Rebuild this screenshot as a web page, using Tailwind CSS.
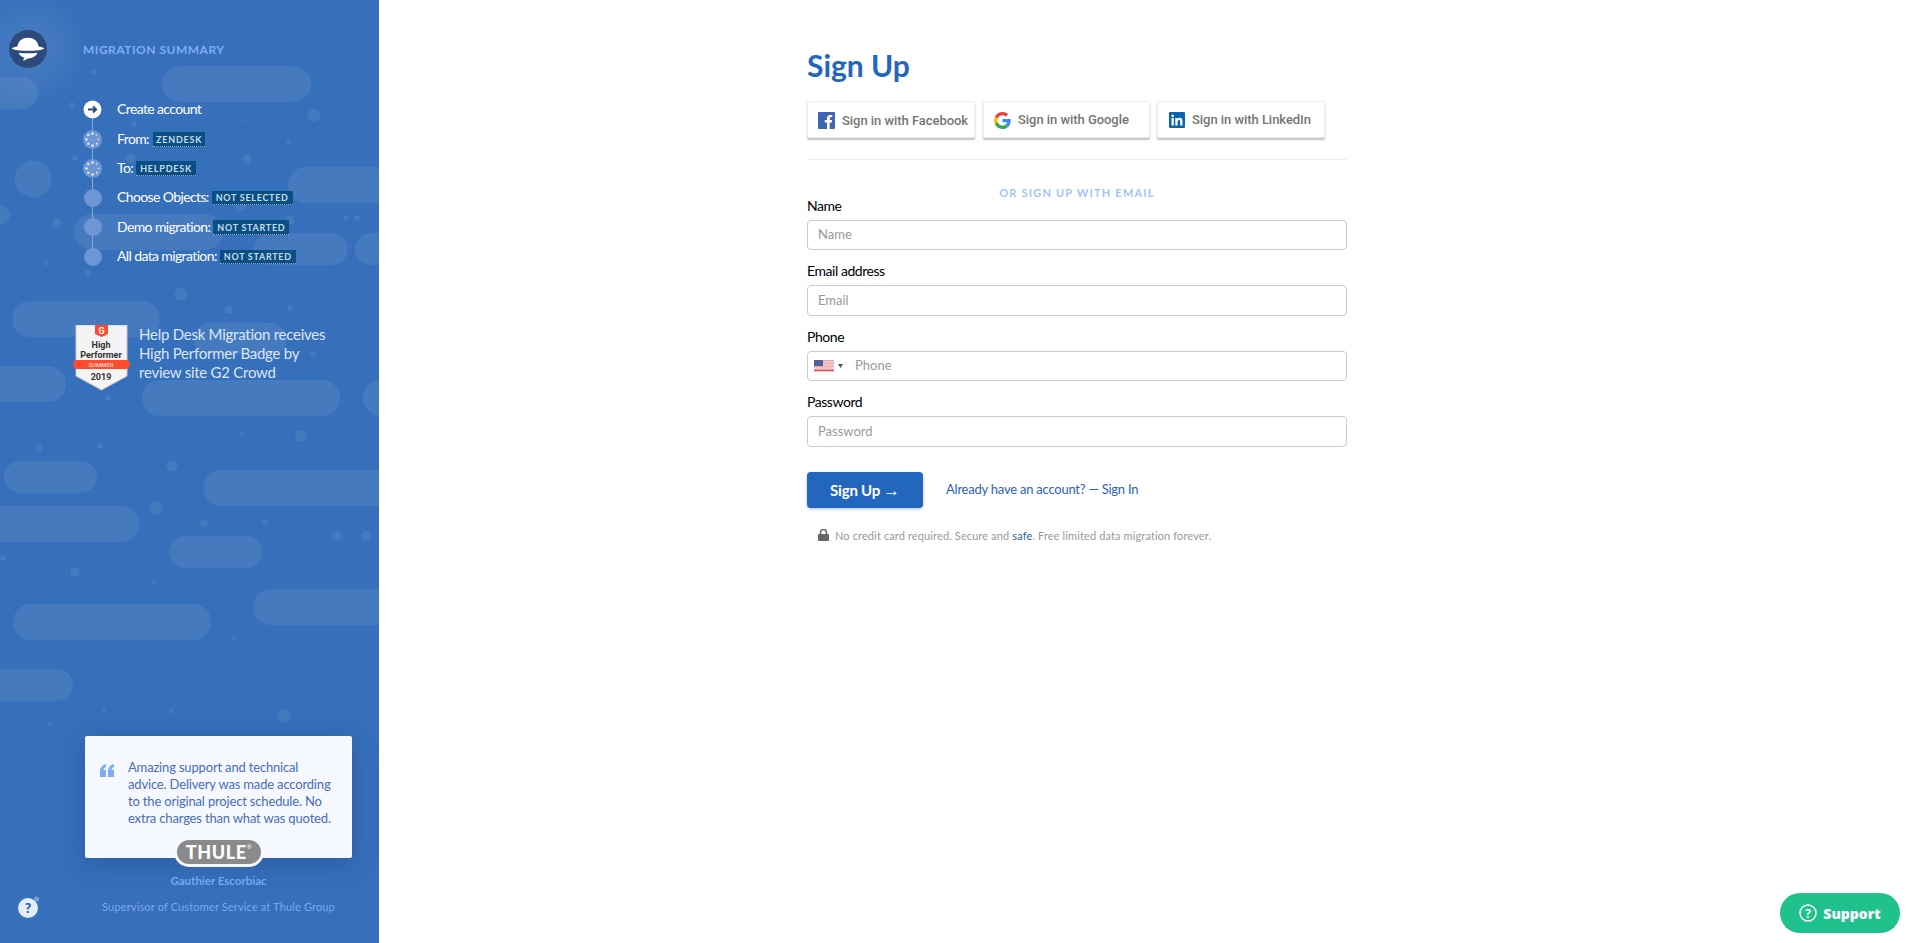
<!doctype html>
<html>
<head>
  <meta charset="UTF-8">
  <meta name="viewport" content="width=device-width, initial-scale=1.0">
  <script src="https://cdn.jsdelivr.net/npm/@tailwindcss/browser@4"></script>
</head>
<body class="bg-white h-screen overflow-hidden flex font-['Lato',sans-serif]">

  <!-- sidebar -->
  <aside class="relative w-[379px] h-[943px] shrink-0 overflow-hidden bg-[#366fba] flex flex-col">
    <svg class="absolute inset-0" width="379" height="943" fill="#fff" fill-opacity="0.08">
      <defs><radialGradient id="glow"><stop offset="0" stop-color="#fff" stop-opacity="0.1"/><stop offset="1" stop-color="#fff" stop-opacity="0"/></radialGradient></defs>
      <circle cx="30" cy="48" r="60" fill="url(#glow)" fill-opacity="1"/>
      <rect x="162" y="66" width="149" height="36" rx="18"/><rect x="-20" y="77" width="58" height="32" rx="16"/>
      <rect x="288" y="167" width="120" height="36" rx="18"/><rect x="74" y="214" width="149" height="36" rx="18"/>
      <rect x="254" y="233" width="94" height="32" rx="16"/><rect x="355" y="233" width="60" height="32" rx="16"/>
      <rect x="12" y="301" width="148" height="36" rx="18"/><rect x="194" y="323" width="93" height="32" rx="16"/>
      <rect x="-20" y="366" width="86" height="36" rx="18"/><rect x="142" y="380" width="198" height="36" rx="18"/>
      <rect x="363" y="380" width="60" height="36" rx="18"/><rect x="4" y="461" width="93" height="32" rx="16"/>
      <rect x="203" y="470" width="200" height="36" rx="18"/><rect x="-20" y="506" width="159" height="36" rx="18"/>
      <rect x="169" y="536" width="93" height="32" rx="16"/><rect x="253" y="589" width="150" height="36" rx="18"/>
      <rect x="13" y="604" width="198" height="36" rx="18"/><rect x="-20" y="669" width="93" height="32" rx="16"/>
      <circle cx="94" cy="72" r="3"/><circle cx="72" cy="105" r="3"/><circle cx="134" cy="124" r="3"/><circle cx="314" cy="115" r="6.5"/>
      <circle cx="289" cy="142" r="2.5"/><circle cx="75" cy="158" r="3"/><circle cx="247" cy="159" r="4.5"/><circle cx="33" cy="179" r="18.5"/>
      <circle cx="0" cy="215" r="10"/><circle cx="57" cy="223" r="4.5"/><circle cx="290" cy="220" r="4"/><circle cx="346" cy="218" r="3"/>
      <circle cx="357" cy="218" r="3"/><circle cx="46" cy="263" r="2.5"/><circle cx="88" cy="273" r="3.5"/><circle cx="181" cy="294" r="6.5"/>
      <circle cx="241" cy="205" r="6"/><circle cx="243" cy="121" r="1.5"/><circle cx="131" cy="158" r="5"/>
      <circle cx="229" cy="310" r="4"/><circle cx="290" cy="308" r="3"/><circle cx="108" cy="398" r="3"/><circle cx="313" cy="354" r="3"/>
      <circle cx="242" cy="434" r="2"/><circle cx="301" cy="436" r="6"/><circle cx="39" cy="448" r="3.5"/><circle cx="100" cy="446" r="3"/>
      <circle cx="172" cy="466" r="5.5"/><circle cx="156" cy="508" r="7"/><circle cx="204" cy="523" r="4"/><circle cx="265" cy="522" r="3"/>
      <circle cx="337" cy="536" r="5"/><circle cx="366" cy="536" r="5"/><circle cx="3" cy="558" r="3"/><circle cx="75" cy="572" r="5"/>
      <circle cx="154" cy="582" r="2"/><circle cx="234" cy="638" r="2"/><circle cx="284" cy="716" r="6.5"/><circle cx="104" cy="710" r="2"/>
      <circle cx="171" cy="711" r="2"/><circle cx="50" cy="724" r="2"/>
    </svg>

    <div class="relative flex pl-[9px] pt-[30px]">
      <svg class="w-[38px] h-[38px] shrink-0" viewBox="0 0 38 38">
        <circle cx="19" cy="19" r="19" fill="#2c4a7c"/>
        <path d="M8.500 16.500C9 11 13.500 7.700 19 7.700s10 3.300 10.500 8.800c2.500.4 4.500 1 6 1.700-1.500 1-3.500 1.700-6 2.100-3 .4-7 .5-10.500.5s-7.500-.1-10.500-.5c-2.500-.4-4.500-1.100-6-2.100 1.500-.7 3.500-1.300 6-1.700z" fill="#fff"/>
        <path d="M9.500 22.800c3 .4 6 .5 9.500.5s6.500-.1 9.500-.5c-1.300 3.400-5 5.500-9.500 5.700l-5 2.500 1.200-3.300c-2.800-1-4.800-2.700-5.700-4.900z" fill="#fff"/>
      </svg>
      <h2 class="ml-[36px] mt-[12px] text-[12px] leading-[16px] font-bold tracking-[0.5px] text-[#7fadf6]">MIGRATION SUMMARY</h2>
    </div>

    <ul class="relative mt-[27px] ml-[83px] flex flex-col text-[14px] text-white tracking-[-0.62px]">
      <li class="absolute left-[9px] top-[10px] h-[150px] w-px bg-[#88a8dc]"></li>
      <li class="relative h-[29.4px] flex items-center">
        <svg class="w-[19px] h-[19px] mr-[15px]" viewBox="0 0 19 19"><circle cx="9.500" cy="9.500" r="9" fill="#fff"/><path d="M5 9.500h8M10 6.500l3.200 3-3.200 3" fill="none" stroke="#2c4a7c" stroke-width="1.800"/></svg>
        <span class="mb-[2px]">Create account</span>
      </li>
      <li class="relative h-[29.4px] flex items-center">
        <svg class="w-[19px] h-[19px] mr-[15px]" viewBox="0 0 19 19"><circle cx="9.500" cy="9.500" r="9.500" fill="#6f96d4"/><g fill="#dfe9fa"><circle cx="9.500" cy="3.500" r="1.300"/><circle cx="13.500" cy="5" r=".8"/><circle cx="15.500" cy="9.500" r=".8"/><circle cx="13.800" cy="13.800" r="1"/><circle cx="9.500" cy="15.500" r="1.300"/><circle cx="5.300" cy="13.800" r="1.200"/><circle cx="3.500" cy="9.500" r="1.300"/><circle cx="5.300" cy="5" r="1.300"/></g></svg>
        <span class="mb-[2px]">From:</span>
        <span class="ml-[4px] h-[15px] px-[3px] bg-[#0a4f84] border-b border-dotted border-[#9ab] text-[9px] leading-[15px] font-bold tracking-[0.8px] text-[#c9dcec]">ZENDESK</span>
      </li>
      <li class="relative h-[29.4px] flex items-center">
        <svg class="w-[19px] h-[19px] mr-[15px]" viewBox="0 0 19 19"><circle cx="9.500" cy="9.500" r="9.500" fill="#6f96d4"/><g fill="#dfe9fa"><circle cx="9.500" cy="3.500" r="1.300"/><circle cx="13.500" cy="5" r=".8"/><circle cx="15.500" cy="9.500" r=".8"/><circle cx="13.800" cy="13.800" r="1"/><circle cx="9.500" cy="15.500" r="1.300"/><circle cx="5.300" cy="13.800" r="1.200"/><circle cx="3.500" cy="9.500" r="1.300"/><circle cx="5.300" cy="5" r="1.300"/></g></svg>
        <span class="mb-[2px]">To:</span>
        <span class="ml-[3px] h-[15px] px-[4px] bg-[#0a4f84] border-b border-dotted border-[#9ab] text-[9px] leading-[15px] font-bold tracking-[0.8px] text-[#c9dcec]">HELPDESK</span>
      </li>
      <li class="relative h-[29.4px] flex items-center">
        <span class="w-[18px] h-[18px] ml-px mr-[15px] rounded-full bg-[#6f96d4]"></span>
        <span class="mb-[2px]">Choose Objects:</span>
        <span class="ml-[3px] h-[14px] px-[4px] bg-[#0a4f84] border-b border-dotted border-[#9ab] text-[9px] leading-[14px] font-bold tracking-[0.7px] text-[#c9dcec]">NOT SELECTED</span>
      </li>
      <li class="relative h-[29.4px] flex items-center">
        <span class="w-[18px] h-[18px] ml-px mr-[15px] rounded-full bg-[#6f96d4]"></span>
        <span class="mb-[2px]">Demo migration:</span>
        <span class="ml-[3px] h-[15px] px-[4px] bg-[#0a4f84] border-b border-dotted border-[#9ab] text-[9px] leading-[15px] font-bold tracking-[0.7px] text-[#c9dcec]">NOT STARTED</span>
      </li>
      <li class="relative h-[29.4px] flex items-center">
        <span class="w-[18px] h-[18px] ml-px mr-[15px] rounded-full bg-[#6f96d4]"></span>
        <span class="mb-[2px]">All data migration:</span>
        <span class="ml-[3px] h-[14px] px-[4px] bg-[#0a4f84] border-b border-dotted border-[#9ab] text-[9px] leading-[14px] font-bold tracking-[0.7px] text-[#c9dcec]">NOT STARTED</span>
      </li>
    </ul>

    <div class="relative mt-[54px] ml-[73px] flex">
      <svg class="w-[57px] h-[66px] shrink-0" viewBox="0 0 57 66" font-family="Roboto,sans-serif" text-anchor="middle">
        <path d="M3 0h51v51L28.500 65 3 51z" fill="#f4f4f4" stroke="#c9c9c9"/>
        <path d="M22 0h13v9l-6.500 3L22 9z" fill="#ff4b2b"/>
        <text x="28.500" y="8.500" font-size="9" font-weight="700" fill="#fff">G</text>
        <text x="28" y="23" font-size="9" font-weight="700" fill="#333">High</text>
        <text x="28" y="32.500" font-size="9" font-weight="700" fill="#333">Performer</text>
        <rect x="0" y="35" width="57" height="9" rx="4.500" fill="#ff4b2b"/>
        <text x="28" y="42" font-size="6" font-weight="500" fill="#ffd9cf">SUMMER</text>
        <text x="28" y="54.500" font-size="9" font-weight="700" fill="#333">2019</text>
      </svg>
      <p class="ml-[9px] w-[200px] text-[15px] leading-[19px] tracking-[-0.25px] text-[#dbe6f7]">Help Desk Migration receives High Performer Badge by review site G2 Crowd</p>
    </div>

    <div class="relative mt-auto mb-[29px] ml-[85px] w-[267px] flex flex-col items-center">
      <div class="relative w-full h-[122px] bg-[#f5f8fe] rounded-[2px] shadow-[0_6px_24px_rgba(30,60,120,0.35)] pt-[23px] pl-[43px] text-[13px] leading-[17px] tracking-[-0.17px] text-[#4a6cbc]">
        <svg class="absolute left-[15px] top-[28px] w-[14px] h-[13px]" viewBox="0 0 14 13" fill="#7cacf8"><path d="M0 13V7.500C0 3.500 2 1 6 0v3C4.500 3.500 3.500 4.500 3.500 6H6v7zM8 13V7.500C8 3.500 10 1 14 0v3c-1.500.5-2.500 1.500-2.500 3H14v7z"/></svg>
        <p class="w-[208px]">Amazing support and technical advice. Delivery was made according to the original project schedule. No extra charges than what was quoted.</p>
        <div class="absolute left-[89px] top-[101px] w-[90px] h-[30px] rounded-full bg-[#8a8a8a] border-[3px] border-[#f5f8fe] flex items-center justify-center font-black text-[18px] tracking-[0.6px] text-white">THULE<span class="text-[6px] font-normal -mt-[12px]">®</span></div>
      </div>
      <p class="mt-[16px] text-[11.5px] leading-[14px] font-bold text-[#7ba9f2]">Gauthier Escorbiac</p>
      <p class="mt-[12px] text-[11px] leading-[14px] tracking-[0.15px] text-[#7ba9f2] whitespace-nowrap">Supervisor of Customer Service at Thule Group</p>
    </div>

    <svg class="absolute left-[17px] top-[895px] w-[24px] h-[24px]" viewBox="0 0 24 24">
      <circle cx="11" cy="13" r="10" fill="#e4edfa"/>
      <circle cx="19.500" cy="4" r="2.500" fill="#7fa3dc"/>
      <text x="11" y="18" text-anchor="middle" font-size="14" font-weight="900" fill="#2c5ea6" font-family="Lato,sans-serif">?</text>
    </svg>
  </aside>

  <!-- sign up form -->
  <main class="w-[540px] ml-[428px] pt-[46px]">
    <h1 class="text-[30px] leading-[38px] font-bold text-[#2366bd]">Sign Up</h1>

    <div class="mt-[17px] flex font-['Roboto',sans-serif] font-medium text-[13px] tracking-[-0.05px] text-[#757575]">
      <button class="w-[168px] h-[37px] flex items-center pl-[10px] pt-[2px] bg-white rounded-[2px] border border-[#eee] shadow-[0_2px_2px_rgba(0,0,0,0.25)] whitespace-nowrap">
        <svg class="w-[17px] h-[17px] mr-[7px] shrink-0" viewBox="0 0 17 17"><rect width="17" height="17" rx="1" fill="#3f65b2"/><path d="M11.700 17v-6.500h2.200l.3-2.500h-2.500V6.400c0-.7.200-1.200 1.200-1.200h1.400V3c-.3 0-1-.1-2-.1-2 0-3.300 1.200-3.300 3.400V8H6.800v2.500H9V17z" fill="#fff"/></svg>
        Sign in with Facebook
      </button>
      <button class="ml-[8px] w-[167px] h-[37px] flex items-center pl-[10px] pt-[1px] bg-white rounded-[2px] border border-[#eee] shadow-[0_2px_2px_rgba(0,0,0,0.25)] whitespace-nowrap">
        <svg class="w-[17px] h-[17px] mr-[7px] shrink-0" viewBox="0 0 48 48"><path fill="#EA4335" d="M24 9.500c3.500 0 6.700 1.200 9.200 3.600l6.900-6.900C35.900 2.400 30.500 0 24 0 14.600 0 6.500 5.400 2.600 13.200l8 6.200C12.400 13.700 17.700 9.500 24 9.500z"/><path fill="#4285F4" d="M47 24.500c0-1.600-.1-3.100-.4-4.500H24v9h12.900c-.6 3-2.200 5.500-4.700 7.200l7.700 6c4.500-4.200 7.100-10.300 7.100-17.700z"/><path fill="#FBBC05" d="M10.500 28.600c-.5-1.500-.8-3-.8-4.600s.3-3.100.8-4.600l-8-6.200C.9 16.500 0 20.100 0 24s.9 7.500 2.600 10.800z"/><path fill="#34A853" d="M24 48c6.500 0 11.900-2.100 15.900-5.800l-7.700-6c-2.200 1.400-4.900 2.300-8.200 2.300-6.300 0-11.600-4.200-13.500-10l-8 6.200C6.500 42.600 14.600 48 24 48z"/></svg>
        Sign in with Google
      </button>
      <button class="ml-[7px] w-[168px] h-[37px] flex items-center pl-[11px] pt-[1px] bg-white rounded-[2px] border border-[#eee] shadow-[0_2px_2px_rgba(0,0,0,0.25)] whitespace-nowrap">
        <svg class="w-[16px] h-[16px] mr-[7px] shrink-0" viewBox="0 0 16 16"><rect width="16" height="16" rx="1" fill="#0b66a8"/><path d="M2.500 6h2.300v7.500H2.500zM3.600 2.500a1.300 1.300 0 1 1 0 2.700 1.300 1.300 0 0 1 0-2.700zM6.300 6h2.200v1c.4-.7 1.200-1.200 2.300-1.200 2.200 0 2.700 1.500 2.700 3.500v4.200h-2.300V9.800c0-1-.1-1.900-1.200-1.900s-1.400.9-1.400 1.800v3.800H6.300z" fill="#fff"/></svg>
        Sign in with LinkedIn
      </button>
    </div>

    <hr class="mt-[21px] border-[#eee]">
    <p class="mt-[26px] text-center text-[11px] leading-[14px] font-bold tracking-[1.2px] text-[#a5c3f5]">OR SIGN UP WITH EMAIL</p>

    <form class="-mt-[3px] flex flex-col gap-[12px] text-[14px] text-black">
      <label class="block">
        <span class="block leading-[18px] mb-[5px] tracking-[-0.45px]">Name</span>
        <input type="text" placeholder="Name" class="w-full h-[30px] px-[10px] pb-[2px] border-[1.5px] border-[#ccc] rounded-[4px] text-[13px] placeholder:text-[#999]">
      </label>
      <label class="block">
        <span class="block leading-[18px] mb-[5px] tracking-[-0.45px]">Email address</span>
        <input type="text" placeholder="Email" class="w-full h-[31px] px-[10px] pb-[2px] border-[1.5px] border-[#ccc] rounded-[4px] text-[13px] placeholder:text-[#999]">
      </label>
      <label class="block">
        <span class="block leading-[18px] mb-[5px] tracking-[-0.45px]">Phone</span>
        <span class="relative block">
          <svg class="absolute left-[7px] top-[9px] w-[20px] h-[12px]" viewBox="0 0 20 12"><rect width="20" height="12" fill="#e8a9ad"/><path d="M0 2h20M0 5h20M0 8h20M0 11h20" stroke="#f4e2e3" stroke-width="1"/><path d="M0 10.500h20" stroke="#c9555c"/><rect width="9" height="6" fill="#565e96"/></svg>
          <svg class="absolute left-[31px] top-[13px] w-[5px] h-[4px]" viewBox="0 0 5 4"><path d="M0 0h5L2.500 4z" fill="#555"/></svg>
          <input type="text" placeholder="Phone" class="w-full h-[30px] pl-[47px] pr-[10px] pb-[2px] border-[1.5px] border-[#ccc] rounded-[4px] text-[13px] placeholder:text-[#999]">
        </span>
      </label>
      <label class="block">
        <span class="block leading-[18px] mb-[5px] tracking-[-0.45px]">Password</span>
        <input type="password" placeholder="Password" class="w-full h-[31px] px-[10px] pb-[2px] border-[1.5px] border-[#ccc] rounded-[4px] text-[13px] placeholder:text-[#999]">
      </label>
    </form>

    <div class="mt-[25px] flex items-center">
      <button class="w-[116px] h-[36px] flex items-center justify-center bg-[#2366bd] rounded-[4px] shadow-[0_1px_3px_rgba(35,102,189,0.4)] text-white text-[15px] font-bold tracking-[-0.2px]">Sign Up<span class="ml-[3px] font-['Liberation_Sans',sans-serif] font-normal text-[17px] leading-none">→</span></button>
      <a class="ml-[23px] text-[13px] tracking-[-0.23px] text-[#2f5fb8]">Already have an account? — Sign In</a>
    </div>

    <p class="mt-[21px] pl-[11px] flex items-center text-[11px] leading-[14px] tracking-[0.12px] text-[#999]">
      <svg class="w-[11px] h-[12px] mr-[6px] -mt-[2px]" viewBox="0 0 11 12"><path d="M2.500 5V3.500a3 3 0 0 1 6 0V5" fill="none" stroke="#666" stroke-width="1.500"/><rect y="5" width="11" height="7" rx="1" fill="#666"/></svg>
      <span>No credit card required. Secure and <a class="text-[#2a6496]">safe</a>. Free limited data migration forever.</span>
    </p>
  </main>

  <button class="fixed left-[1780px] top-[893px] w-[120px] h-[40px] rounded-full bg-[#1fc18d] flex items-center justify-center gap-[6px] font-['Open_Sans',sans-serif] font-extrabold text-[14px] text-white">
    <svg class="w-[18px] h-[18px]" viewBox="0 0 18 18"><circle cx="9" cy="9" r="8" fill="none" stroke="#fff" stroke-width="1.500"/><text x="9" y="13.500" text-anchor="middle" font-size="12" font-weight="700" fill="#fff" font-family="Open Sans,sans-serif">?</text></svg>
    Support
  </button>
</body>
</html>
